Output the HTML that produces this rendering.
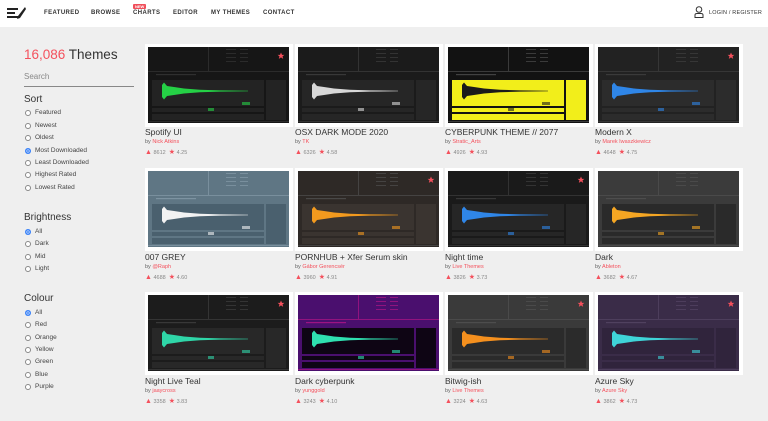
<!DOCTYPE html>
<html><head><meta charset="utf-8"><style>
*{margin:0;padding:0;box-sizing:border-box}
body{width:768px;height:421px;overflow:hidden;background:#efefef;font-family:"Liberation Sans",sans-serif;position:relative}
.hdr{position:absolute;left:0;top:0;width:768px;height:27px;background:#fff}
.nav{position:absolute;top:10px;font-size:6px;font-weight:bold;letter-spacing:.4px;color:#333;white-space:nowrap}
.new{position:absolute;left:133px;top:4px;background:#f04e5a;color:#fff;font-size:4px;font-weight:bold;padding:0 2px;line-height:5px;border-radius:1px}
h1{position:absolute;left:24px;top:47px;font-size:13.5px;font-weight:normal;color:#333}
h1 span{color:#f4505c}
.search{position:absolute;left:24px;top:72px;width:110px;height:15px;border-bottom:1px solid #888;font-size:8px;color:#888}
.h2{position:absolute;left:24px;font-size:10px;color:#333}
.r{position:absolute;left:25px;font-size:6.5px;color:#444;height:8px;line-height:8px}
.r i{position:absolute;left:0;top:1px;width:6px;height:6px;border:1px solid #888;border-radius:50%;background:#fff}
.r.on i{border:none;background:#3a82f7;box-shadow:inset 0 0 0 1.5px #3a82f7,inset 0 0 0 2px #fff}
.r b{font-weight:normal;margin-left:10px}
.card{position:absolute;width:148px;height:83px;background:#fff}
.card svg{position:absolute;left:3px;top:3px;width:141px;height:76px;display:block}
.t{position:absolute;font-size:8.5px;color:#333;white-space:nowrap}
.by{position:absolute;font-size:5.5px;color:#666;white-space:nowrap}
.by span{color:#f4505c}
.st{position:absolute;font-size:5.5px;color:#888;white-space:nowrap}
.st em{color:#f4505c;font-style:normal;font-size:7px}
.bg{fill:var(--bg)}.pn{fill:var(--pn)}.wv{fill:var(--wv)}.ln{fill:var(--ln)}
</style></head><body>
<div class="hdr"></div>
<svg style="position:absolute;left:7px;top:7px" width="19" height="13" viewBox="0 0 19 13"><rect x="0" y="1" width="11" height="2" fill="#222"/><rect x="0" y="5" width="8" height="2" fill="#222"/><rect x="0" y="9" width="11" height="2" fill="#222"/><path d="M18 0 L11 9 L10 12 L13 11 L19 2Z" fill="#222"/></svg>
<div class="nav" style="left:44px">FEATURED</div>
<div class="nav" style="left:91px">BROWSE</div>
<div class="new">NEW</div>
<div class="nav" style="left:133px">CHARTS</div>
<div class="nav" style="left:173px">EDITOR</div>
<div class="nav" style="left:211px">MY THEMES</div>
<div class="nav" style="left:263px">CONTACT</div>
<svg style="position:absolute;left:694px;top:6px" width="10" height="12" viewBox="0 0 10 12"><circle cx="5" cy="3.5" r="2.8" fill="none" stroke="#333" stroke-width="1"/><path d="M1 11.5 V9 Q1 7.5 3 7.5 H7 Q9 7.5 9 9 V11.5Z" fill="none" stroke="#333" stroke-width="1"/></svg>
<div class="nav" style="left:709px;font-size:5.5px;top:10px;font-weight:normal;letter-spacing:.2px">LOGIN / REGISTER</div>

<h1><span>16,086</span> Themes</h1>
<div class="search">Search</div>
<div class="h2" style="top:94px">Sort</div>
<div class="r" style="top:109px"><i></i><b>Featured</b></div>
<div class="r" style="top:122px"><i></i><b>Newest</b></div>
<div class="r" style="top:134px"><i></i><b>Oldest</b></div>
<div class="r on" style="top:147px"><i></i><b>Most Downloaded</b></div>
<div class="r" style="top:159px"><i></i><b>Least Downloaded</b></div>
<div class="r" style="top:171px"><i></i><b>Highest Rated</b></div>
<div class="r" style="top:184px"><i></i><b>Lowest Rated</b></div>
<div class="h2" style="top:212px">Brightness</div>
<div class="r on" style="top:228px"><i></i><b>All</b></div>
<div class="r" style="top:240px"><i></i><b>Dark</b></div>
<div class="r" style="top:253px"><i></i><b>Mid</b></div>
<div class="r" style="top:265px"><i></i><b>Light</b></div>
<div class="h2" style="top:293px">Colour</div>
<div class="r on" style="top:309px"><i></i><b>All</b></div>
<div class="r" style="top:321px"><i></i><b>Red</b></div>
<div class="r" style="top:334px"><i></i><b>Orange</b></div>
<div class="r" style="top:346px"><i></i><b>Yellow</b></div>
<div class="r" style="top:358px"><i></i><b>Green</b></div>
<div class="r" style="top:371px"><i></i><b>Blue</b></div>
<div class="r" style="top:383px"><i></i><b>Purple</b></div>

<svg width="0" height="0" style="position:absolute"><defs>
<g id="shot">
<rect class="bg" width="141" height="76"/>
<rect class="ln" x="0" y="24" width="141" height="0.6"/>
<rect class="ln" x="60" y="0" width="0.6" height="24"/>
<rect class="ln" x="78" y="2" width="10" height="1" opacity=".6"/><rect class="ln" x="92" y="2" width="8" height="1" opacity=".6"/>
<rect class="ln" x="78" y="6" width="10" height="1" opacity=".6"/><rect class="ln" x="92" y="6" width="8" height="1" opacity=".6"/>
<rect class="ln" x="78" y="10" width="10" height="1" opacity=".6"/><rect class="ln" x="92" y="10" width="8" height="1" opacity=".6"/>
<rect class="ln" x="78" y="14" width="10" height="1" opacity=".6"/><rect class="ln" x="92" y="14" width="8" height="1" opacity=".6"/>
<rect class="ln" x="8" y="27" width="40" height="1.2" opacity=".7"/>
<rect class="pn" x="4" y="33" width="112" height="26"/>
<rect class="pn" x="118" y="33" width="20" height="40"/>
<path class="wv" d="M14 38 L16 35.5 L19 39 L26 40 L36 41.5 L52 42.7 L72 43.4 L100 43.7 L100 44.3 L72 44.6 L52 45.3 L36 46.5 L26 48 L19 49 L16 52.5 L14 50Z"/>
<rect class="pn" x="4" y="61" width="112" height="4"/>
<rect class="pn" x="4" y="67" width="112" height="6"/>
<rect class="wv" x="60" y="61" width="6" height="3" opacity=".6"/>
<rect class="wv" x="94" y="55" width="8" height="3" opacity=".6"/>
<rect class="ln" x="0" y="74" width="141" height="0.6"/>
</g>
<path id="star" d="M0 -3.5 L1 -1.1 L3.4 -1.1 L1.5 0.4 L2.2 2.9 L0 1.4 L-2.2 2.9 L-1.5 0.4 L-3.4 -1.1 L-1 -1.1Z" fill="#f4505c"/>
</defs></svg>

<!-- Row 1 -->
<div class="card" style="left:145px;top:44px"><svg viewBox="0 0 141 76" style="--bg:#161616;--pn:#232323;--wv:#25d146;--ln:#3a3a3a"><use href="#shot"/><use href="#star" x="133" y="9"/></svg></div>
<div class="card" style="left:295px;top:44px"><svg viewBox="0 0 141 76" style="--bg:#1b1b1b;--pn:#262626;--wv:#d8d8d8;--ln:#444"><use href="#shot"/></svg></div>
<div class="card" style="left:445px;top:44px"><svg viewBox="0 0 141 76" style="--bg:#121212;--pn:#f2ee1a;--wv:#1a1a1a;--ln:#555"><use href="#shot"/></svg></div>
<div class="card" style="left:595px;top:44px"><svg viewBox="0 0 141 76" style="--bg:#222;--pn:#2c2c2c;--wv:#2f86e8;--ln:#444"><use href="#shot"/><use href="#star" x="133" y="9"/></svg></div>
<div class="t" style="left:145px;top:127px">Spotify UI</div><div class="by" style="left:145px;top:139px">by <span>Nick Atkins</span></div><div class="st" style="left:145px;top:148px"><em>▲</em> 8612 &nbsp;<em>★</em> 4.25</div>
<div class="t" style="left:295px;top:127px">OSX DARK MODE 2020</div><div class="by" style="left:295px;top:139px">by <span>TK</span></div><div class="st" style="left:295px;top:148px"><em>▲</em> 6326 &nbsp;<em>★</em> 4.58</div>
<div class="t" style="left:445px;top:127px">CYBERPUNK THEME // 2077</div><div class="by" style="left:445px;top:139px">by <span>Stratic_Arts</span></div><div class="st" style="left:445px;top:148px"><em>▲</em> 4926 &nbsp;<em>★</em> 4.93</div>
<div class="t" style="left:595px;top:127px">Modern X</div><div class="by" style="left:595px;top:139px">by <span>Marek Iwaszkiewicz</span></div><div class="st" style="left:595px;top:148px"><em>▲</em> 4648 &nbsp;<em>★</em> 4.75</div>

<!-- Row 2 -->
<div class="card" style="left:145px;top:168px"><svg viewBox="0 0 141 76" style="--bg:#5f7684;--pn:#4a606e;--wv:#f2f2f2;--ln:#8aa0ae"><use href="#shot"/></svg></div>
<div class="card" style="left:295px;top:168px"><svg viewBox="0 0 141 76" style="--bg:#2e2926;--pn:#3a3430;--wv:#f39a1e;--ln:#555"><use href="#shot"/><use href="#star" x="133" y="9"/></svg></div>
<div class="card" style="left:445px;top:168px"><svg viewBox="0 0 141 76" style="--bg:#1a1a1a;--pn:#262626;--wv:#2f86e8;--ln:#444"><use href="#shot"/><use href="#star" x="133" y="9"/></svg></div>
<div class="card" style="left:595px;top:168px"><svg viewBox="0 0 141 76" style="--bg:#3b3b3b;--pn:#2a2a2a;--wv:#f5a623;--ln:#555"><use href="#shot"/></svg></div>
<div class="t" style="left:145px;top:252px">007 GREY</div><div class="by" style="left:145px;top:264px">by <span>@Raph</span></div><div class="st" style="left:145px;top:273px"><em>▲</em> 4688 &nbsp;<em>★</em> 4.60</div>
<div class="t" style="left:295px;top:252px">PORNHUB + Xfer Serum skin</div><div class="by" style="left:295px;top:264px">by <span>Gábor Gerencsér</span></div><div class="st" style="left:295px;top:273px"><em>▲</em> 3960 &nbsp;<em>★</em> 4.91</div>
<div class="t" style="left:445px;top:252px">Night time</div><div class="by" style="left:445px;top:264px">by <span>Live Themes</span></div><div class="st" style="left:445px;top:273px"><em>▲</em> 3826 &nbsp;<em>★</em> 3.73</div>
<div class="t" style="left:595px;top:252px">Dark</div><div class="by" style="left:595px;top:264px">by <span>Ableton</span></div><div class="st" style="left:595px;top:273px"><em>▲</em> 3682 &nbsp;<em>★</em> 4.67</div>

<!-- Row 3 -->
<div class="card" style="left:145px;top:292px"><svg viewBox="0 0 141 76" style="--bg:#1c1c1c;--pn:#282828;--wv:#2fd6a8;--ln:#444"><use href="#shot"/><use href="#star" x="133" y="9"/></svg></div>
<div class="card" style="left:295px;top:292px"><svg viewBox="0 0 141 76" style="--bg:#4a0f6e;--pn:#0e0514;--wv:#2fe0b0;--ln:#c0168a"><use href="#shot"/></svg></div>
<div class="card" style="left:445px;top:292px"><svg viewBox="0 0 141 76" style="--bg:#3a3a3a;--pn:#2b2b2b;--wv:#f5901e;--ln:#555"><use href="#shot"/><use href="#star" x="133" y="9"/></svg></div>
<div class="card" style="left:595px;top:292px"><svg viewBox="0 0 141 76" style="--bg:#3a2c48;--pn:#30243c;--wv:#3fd4d8;--ln:#5a4a6a"><use href="#shot"/><use href="#star" x="133" y="9"/></svg></div>
<div class="t" style="left:145px;top:376px">Night Live Teal</div><div class="by" style="left:145px;top:388px">by <span>jaaycross</span></div><div class="st" style="left:145px;top:397px"><em>▲</em> 3358 &nbsp;<em>★</em> 3.83</div>
<div class="t" style="left:295px;top:376px">Dark cyberpunk</div><div class="by" style="left:295px;top:388px">by <span>yunggold</span></div><div class="st" style="left:295px;top:397px"><em>▲</em> 3243 &nbsp;<em>★</em> 4.10</div>
<div class="t" style="left:445px;top:376px">Bitwig-ish</div><div class="by" style="left:445px;top:388px">by <span>Live Themes</span></div><div class="st" style="left:445px;top:397px"><em>▲</em> 3224 &nbsp;<em>★</em> 4.63</div>
<div class="t" style="left:595px;top:376px">Azure Sky</div><div class="by" style="left:595px;top:388px">by <span>Azure Sky</span></div><div class="st" style="left:595px;top:397px"><em>▲</em> 3862 &nbsp;<em>★</em> 4.73</div>
</body></html>
